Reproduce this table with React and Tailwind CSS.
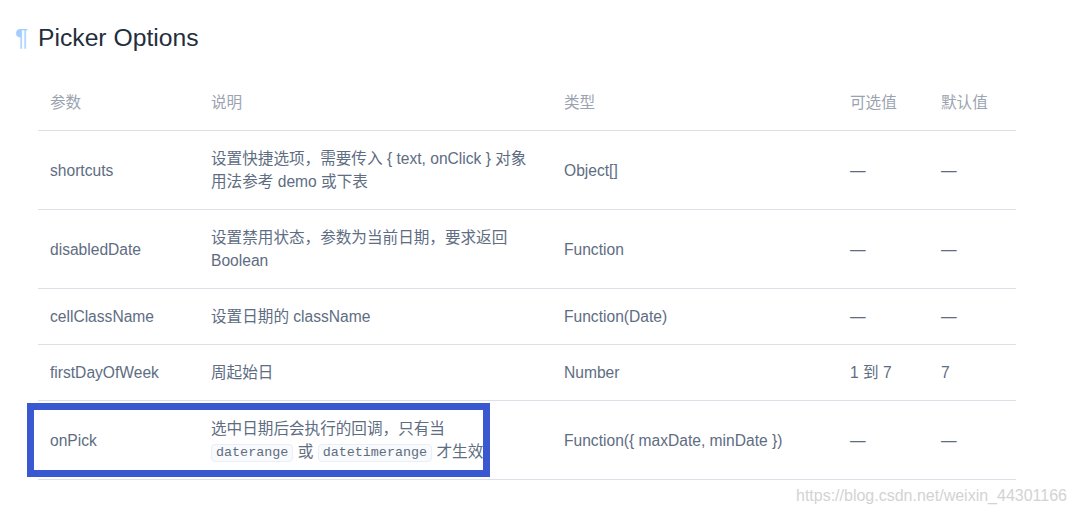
export default function App() {
  const font = { fontFamily: '"Liberation Sans", Arial, "Noto Sans CJK SC", sans-serif' };
  const mono = { fontFamily: '"Liberation Mono", "DejaVu Sans Mono", monospace' };
  const rows = [
    { p: 'shortcuts', d: <>设置快捷选项，需要传入 {'{'} text, onClick {'}'} 对象<br />用法参考 demo 或下表</>, t: 'Object[]', o: '—', v: '—' },
    { p: 'disabledDate', d: <>设置禁用状态，参数为当前日期，要求返回<br />Boolean</>, t: 'Function', o: '—', v: '—' },
    { p: 'cellClassName', d: '设置日期的 className', t: 'Function(Date)', o: '—', v: '—' },
    { p: 'firstDayOfWeek', d: '周起始日', t: 'Number', o: '1 到 7', v: '7' },
    {
      p: 'onPick',
      d: (
        <>
          选中日期后会执行的回调，只有当<br />
          <code className="inline-block rounded-[4px] border border-[#eaeefb] bg-[#f9fafc] px-[4px] text-[13.4px] leading-[16px] align-middle text-[#5e6d82]" style={mono}>daterange</code>{' '}或{' '}
          <code className="inline-block rounded-[4px] border border-[#eaeefb] bg-[#f9fafc] px-[4px] text-[13.4px] leading-[16px] align-middle text-[#5e6d82]" style={mono}>datetimerange</code>{' '}才生效
        </>
      ),
      t: 'Function({ maxDate, minDate })', o: '—', v: '—', boxed: true,
    },
  ];
  const widths = ['w-[161px]', 'w-[353px]', 'w-[286px]', 'w-[91px]', 'w-[87px]'];
  return (
    <div className="relative h-[514px] w-[1076px] overflow-hidden bg-white" style={font}>
      <div className="pl-[38px] pt-[20px]">
        <h3 className="relative text-[24.7px] font-normal leading-[36px] text-[#1f2f3d]">
          <span className="absolute left-[-23px] top-0 text-[#a0cfff]">¶</span>
          <span>Picker Options</span>
        </h3>
        <div className="mt-[19px] w-[978px]">
          <div className="flex border-b border-[#dcdfe6] text-[15.6px] leading-[23px] text-[#9ba3b0]">
            {['参数', '说明', '类型', '可选值', '默认值'].map((h, i) => (
              <div key={h} className={`${widths[i]} shrink-0 py-[16px] pl-[12px]`}>{h}</div>
            ))}
          </div>
          {rows.map((r) => (
            <div key={r.p} className="relative flex items-center border-b border-[#dcdfe6] text-[15.6px] leading-[23px] text-[#5e6d82]">
              {[r.p, r.d, r.t, r.o, r.v].map((c, i) => (
                <div key={i} className={`${widths[i]} shrink-0 whitespace-nowrap py-[16px] pl-[12px]`}>{c}</div>
              ))}
              {r.boxed && (
                <div className="pointer-events-none absolute left-[-11px] top-[2px] h-[74px] w-[463px] border-[7px] border-[#3a58d0]" />
              )}
            </div>
          ))}
        </div>
      </div>
      <div className="absolute right-[9px] top-[485px] text-[16px] leading-[22px] text-[#d3d3d3]">https://blog.csdn.net/weixin_44301166</div>
    </div>
  );
}
